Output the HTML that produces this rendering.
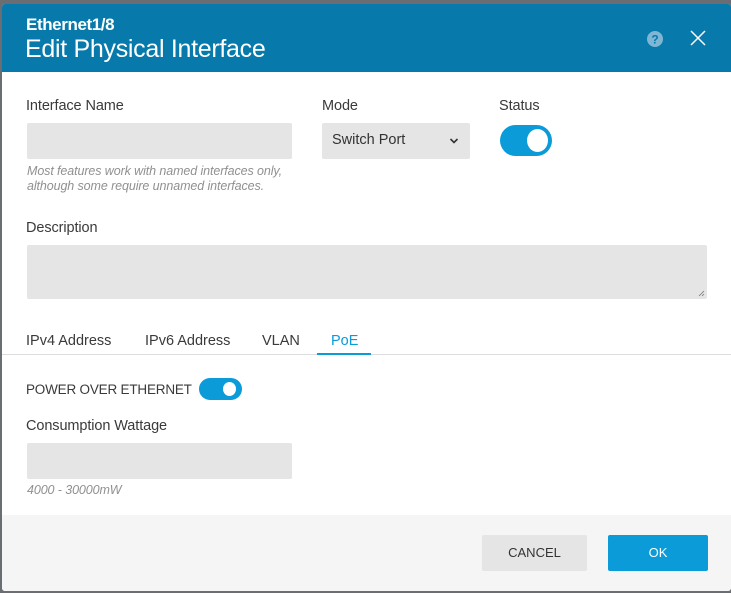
<!DOCTYPE html>
<html><head><style>
*{margin:0;padding:0;box-sizing:border-box}
body{width:731px;height:593px;background:#6a6e72;font-family:"Liberation Sans",sans-serif;position:relative;overflow:hidden}
.dlg{position:absolute;left:2px;top:4px;width:729px;height:587px;background:#fff;border-radius:3px;overflow:hidden}
.hdr{position:absolute;left:0;top:0;width:100%;height:68px;background:#0779aa;color:#fff}
.t1{position:absolute;left:24px;top:11px;font-size:17px;font-weight:bold;letter-spacing:-0.4px}
.t2{position:absolute;left:23px;top:31px;font-size:25px;letter-spacing:-0.3px}
.lbl{position:absolute;font-size:14.5px;color:#3a3a3a;letter-spacing:-0.1px}
.inp{position:absolute;background:#e5e5e5;border-radius:2px}
.hint{position:absolute;font-size:12.5px;font-style:italic;color:#909090;line-height:15px;letter-spacing:-0.1px}
.tog{position:absolute;background:#0a9bd8;border-radius:14px}
.tog i{position:absolute;background:#fff;border-radius:50%}
.tab{position:absolute;top:329px;font-size:14.5px;color:#3a3a3a;letter-spacing:0px}
.ftr{position:absolute;left:0;top:511px;width:100%;height:76px;background:#f5f5f5}
.btn{position:absolute;top:531px;height:36px;border-radius:2px;font-size:13px;text-align:center;line-height:36px}
</style></head><body>
<div class="dlg">
<div class="hdr">
<div class="t1">Ethernet1/8</div>
<div class="t2">Edit Physical Interface</div>
<svg style="position:absolute;left:645px;top:27px" width="16" height="16"><circle cx="8" cy="8" r="8" fill="#7fb6d3"/><text x="8" y="12.5" font-size="12" font-weight="bold" fill="#0779aa" text-anchor="middle" font-family="Liberation Sans">?</text></svg>
<svg style="position:absolute;left:688px;top:26px" width="16" height="16"><path d="M1 1L15 15M15 1L1 15" stroke="#fff" stroke-width="1.5"/></svg>
</div>
<div class="lbl" style="left:24px;top:94px">Interface Name</div>
<div class="lbl" style="left:320px;top:94px">Mode</div>
<div class="lbl" style="left:497px;top:94px">Status</div>
<div class="inp" style="left:25px;top:119px;width:265px;height:36px"></div>
<div class="inp" style="left:320px;top:119px;width:148px;height:36px"><span style="position:absolute;left:10px;top:9px;font-size:14.5px;color:#333">Switch Port</span><svg style="position:absolute;left:127px;top:14px" width="10" height="8"><path d="M1.5 2L5 5.5 8.5 2" stroke="#333" stroke-width="1.6" fill="none"/></svg></div>
<div class="tog" style="left:498px;top:121px;width:52px;height:31px;border-radius:16px"><i style="left:27px;top:4px;width:21px;height:23px"></i></div>
<div class="hint" style="left:25px;top:160px">Most features work with named interfaces only,<br>although some require unnamed interfaces.</div>
<div class="lbl" style="left:24px;top:216px">Description</div>
<div class="inp" style="left:25px;top:241px;width:680px;height:54px"><svg style="position:absolute;right:2px;bottom:2px" width="7" height="7"><path d="M6 1L1 6M6 4L4 6" stroke="#777" stroke-width="0.8"/></svg></div>
<div class="tab" style="left:24px">IPv4 Address</div>
<div class="tab" style="left:143px">IPv6 Address</div>
<div class="tab" style="left:260px">VLAN</div>
<div class="tab" style="left:329px;color:#0a9bd8">PoE</div>
<div style="position:absolute;left:0;top:350px;width:100%;height:1px;background:#ddd"></div>
<div style="position:absolute;left:315px;top:349px;width:54px;height:2px;background:#0a9bd8"></div>
<div class="lbl" style="left:24px;top:378px;font-size:13.5px;letter-spacing:-0.2px">POWER OVER ETHERNET</div>
<div class="tog" style="left:197px;top:374px;width:43px;height:22px"><i style="left:24px;top:4px;width:13px;height:14px"></i></div>
<div class="lbl" style="left:24px;top:414px">Consumption Wattage</div>
<div class="inp" style="left:25px;top:439px;width:265px;height:36px"></div>
<div class="hint" style="left:25px;top:479px">4000 - 30000mW</div>
<div class="ftr"></div>
<div class="btn" style="left:480px;width:105px;background:#e5e5e5;color:#333">CANCEL</div>
<div class="btn" style="left:606px;width:100px;background:#0a9bd8;color:#fff">OK</div>
</div>
</body></html>
